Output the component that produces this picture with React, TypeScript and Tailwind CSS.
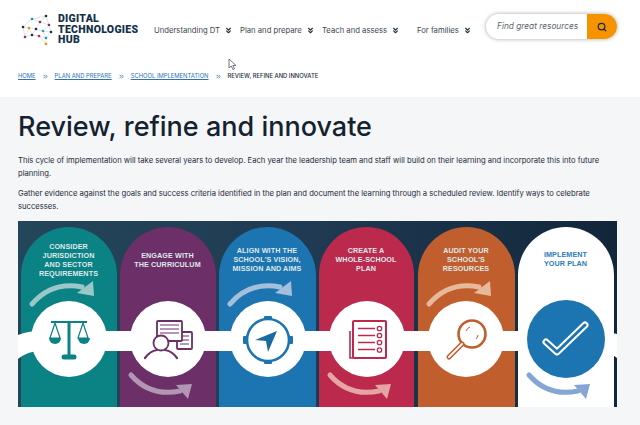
import React from 'react';
import { ChevronsDown, ChevronsRight, Search } from 'lucide-react';

const NAV = [
  { label: 'Understanding DT', cls: 'w-[86px]' },
  { label: 'Plan and prepare', cls: 'w-[82px]' },
  { label: 'Teach and assess', cls: 'w-[95px]' },
  { label: 'For families', cls: 'w-[68px]' },
];

const CRUMBS = ['HOME', 'PLAN AND PREPARE', 'SCHOOL IMPLEMENTATION'];

const DOTS: [number, number, string][] = [
  [46, 17, '#1f2f44'], [32, 20, '#1a9c9c'], [40, 23, '#8f2a6a'], [23, 28, '#1f2f44'], [49, 26, '#8f2a6a'],
  [29, 29, '#f39200'], [36, 30, '#1f2f44'], [43, 32, '#2aa0c8'], [51, 33, '#1f2f44'], [25, 38, '#8f2a6a'],
  [32, 36, '#1f2f44'], [39, 37, '#bb2a4d'], [46, 39, '#1a9c9c'], [46, 45, '#f39200'],
];

const LINKS = [[0, 1], [0, 2], [0, 4], [1, 3], [1, 2], [2, 6], [2, 4], [3, 5], [3, 9], [5, 6], [5, 10], [6, 7], [7, 4], [7, 8], [4, 8], [9, 10], [10, 11], [11, 12], [12, 13], [12, 8], [7, 12], [6, 10], [11, 13], [9, 5]];

const Logo = () => (
  <svg width="34" height="34" viewBox="20 14 34 34" className="shrink-0">
    {LINKS.map(([a, b], i) => (
      <line key={i} x1={DOTS[a][0]} y1={DOTS[a][1]} x2={DOTS[b][0]} y2={DOTS[b][1]} stroke="#c3c9d0" strokeWidth="0.5" />
    ))}
    {DOTS.map(([x, y, c], i) => <circle key={i} cx={x} cy={y} r="1.3" fill={c} />)}
  </svg>
);

const ARCHES = [
  { x: 21, w: 96, fill: '#0b8284', arrow: '#9cc7c8', lines: ['CONSIDER', 'JURISDICTION', 'AND SECTOR', 'REQUIREMENTS'], y0: 249, up: true },
  { x: 120, w: 96, fill: '#6c2f68', arrow: '#b296b3', lines: ['ENGAGE WITH', 'THE CURRICULUM'], y0: 258, up: false },
  { x: 219, w: 97, fill: '#1c75b0', arrow: '#a3bfdc', lines: ['ALIGN WITH THE', "SCHOOL'S VISION,", 'MISSION AND AIMS'], y0: 253, up: true },
  { x: 319, w: 95, fill: '#bb2a4d', arrow: '#e5a5a4', lines: ['CREATE A', 'WHOLE-SCHOOL', 'PLAN'], y0: 253, up: false },
  { x: 418, w: 97, fill: '#c15e2d', arrow: '#e6b99a', lines: ['AUDIT YOUR', "SCHOOL'S", 'RESOURCES'], y0: 253, up: true },
  { x: 518, w: 96, fill: '#ffffff', arrow: '#85a6d2', lines: ['IMPLEMENT', 'YOUR PLAN'], y0: 257, up: false },
];

const Infographic = () => (
  <svg viewBox="18 221 599 186" className="block w-[599px] h-[186px]">
    <defs>
      <linearGradient id="bg" x1="0" x2="1" y1="0" y2="0">
        <stop offset="0" stopColor="#24465a" />
        <stop offset="0.5" stopColor="#1f3a52" />
        <stop offset="1" stopColor="#12263a" />
      </linearGradient>
    </defs>
    <rect x="18" y="221" width="599" height="186" fill="url(#bg)" />
    {ARCHES.map((a, i) => {
      const r = a.w / 2;
      const cx = a.x + r;
      return (
        <g key={i}>
          <path d={`M${a.x} 407V${227 + r}a${r} ${r} 0 0 1 ${a.w} 0V407Z`} fill={a.fill} />
          {a.lines.map((t, j) => (
            <text key={t} x={cx - 0.5} y={a.y0 + j * 8.9} textAnchor="middle" fontFamily="'Liberation Sans', sans-serif" fontWeight="700" fontSize="7.2" letterSpacing="0.1" fill={i === 5 ? '#2a7db5' : '#dfe8ea'}>{t}</text>
          ))}
          {a.up ? (
            <g transform={`translate(${a.x - 21} 0)`} fill={a.arrow}>
              <path d="M32 304Q52 281 82 287" fill="none" stroke={a.arrow} strokeWidth="5" strokeLinecap="round" />
              <path d="M93 281L94 296L77 293Z" />
            </g>
          ) : (
            <g transform={`translate(${a.x - 120} 0)`} fill={a.arrow}>
              <path d="M131 375Q150 397 180 391" fill="none" stroke={a.arrow} strokeWidth="5" strokeLinecap="round" />
              <path d="M192 384L188 399L176 385Z" />
            </g>
          )}
        </g>
      );
    })}
    {/* white band through the circles */}
    <path d="M18 335Q28 331 40 331H600Q610 332 617 334V358Q608 351 600 351H40Q28 351 18 359Z" fill="#fff" />
    {[69, 168, 268, 367, 466].map(cx => <circle key={cx} cx={cx} cy="339" r="38" fill="#fff" />)}
    <circle cx="566" cy="339" r="39" fill="#1c75b0" />

    {/* scales */}
    <g fill="none" stroke="#0b8284" strokeWidth="2">
      <path d="M51 322H87" strokeWidth="1.8" />
      <path d="M69 322V357" strokeWidth="3" />
      <path d="M64 357H74" strokeWidth="5" strokeLinecap="round" />
      <path d="M55 323L50 338H60Z" strokeWidth="1.2" />
      <path d="M83 323L78 338H88Z" strokeWidth="1.2" />
      <path d="M49 338a6 6 0 0 0 12 0Z" fill="#0b8284" stroke="none" />
      <path d="M78 338a6 6 0 0 0 12 0Z" fill="#0b8284" stroke="none" />
    </g>

    {/* person with documents */}
    <g fill="#fff" stroke="#6c2f68" strokeWidth="1.8">
      <rect x="177" y="332" width="15" height="17" rx="1" />
      <path d="M180 336H189M180 340H189M180 344H189" strokeWidth="1" />
      <rect x="157" y="321" width="25" height="20" rx="1" />
      <path d="M160 325H179M160 329H179M160 333H179" strokeWidth="1.2" />
      <circle cx="161" cy="343" r="7.5" />
      <path d="M145 358Q150 351 157 350M177 358Q172 351 165 350" fill="none" strokeWidth="2.2" strokeLinecap="round" />
    </g>

    {/* compass */}
    <g>
      <circle cx="268" cy="340" r="21" fill="none" stroke="#1c75b0" strokeWidth="2.6" />
      <rect x="264" y="316" width="8" height="4" rx="1" fill="#1c75b0" />
      <rect x="264" y="360" width="8" height="4" rx="1" fill="#1c75b0" />
      <rect x="243" y="336" width="5" height="8" rx="1" fill="#1c75b0" />
      <rect x="288" y="336" width="5" height="8" rx="1" fill="#1c75b0" />
      <path d="M277 331L255 340L266 341L268 352Z" fill="#1c6a9e" />
    </g>

    {/* checklist */}
    <g fill="none" stroke="#bb2a4d">
      <rect x="353" y="321" width="33" height="37" rx="1" strokeWidth="2" fill="#fff" />
      <path d="M350 331V358H353" strokeWidth="1.6" />
      <path d="M358 328.5H375M358 335.5H375M358 342.5H375M358 349.5H375" strokeWidth="1.4" />
      <circle cx="379.5" cy="328.5" r="2.2" strokeWidth="1.3" />
      <circle cx="379.5" cy="335.5" r="2.2" strokeWidth="1.3" />
      <circle cx="379.5" cy="342.5" r="2.2" strokeWidth="1.3" />
      <circle cx="379.5" cy="350" r="2.2" strokeWidth="1.3" />
    </g>

    {/* magnifier */}
    <g fill="none" stroke="#c15e2d">
      <circle cx="472" cy="334" r="13.5" strokeWidth="2.6" />
      <path d="M466 331a7 7 0 0 1 4-4M478 335a7 7 0 0 1-2 4" strokeWidth="1" />
      <path d="M462 344L449 357" strokeWidth="5" strokeLinecap="round" />
      <path d="M462 344L449 357" strokeWidth="1.8" strokeLinecap="round" stroke="#fff" />
    </g>

    {/* tick */}
    <path d="M546 342L557 352L585 325" fill="none" stroke="#fff" strokeWidth="7" strokeLinecap="round" strokeLinejoin="round" />
    <path d="M546 342L557 352L585 325" fill="none" stroke="#1c75b0" strokeWidth="3" strokeLinecap="round" strokeLinejoin="round" />
  </svg>
);

const App: React.FC = () => {
  return (
    <div className="relative w-[640px] h-[425px] overflow-hidden bg-white font-['Inter',sans-serif] text-[#1c2b39]">
      <header className="h-[97px] bg-white pl-[20px]">
        <div className="flex items-center h-[60px]">
          <Logo />
          <div className="ml-[4px] w-[98px] font-['Roboto',sans-serif] font-black text-[10.5px] leading-[10.5px] tracking-[0.3px] text-[#12304a]">
            DIGITAL<br />TECHNOLOGIES<br />HUB
          </div>
          <nav className="flex items-center ml-[-2px] mt-[1px] text-[7.7px] text-[#3c4650]">
            {NAV.map(n => (
              <div key={n.label} className={`flex items-center gap-[4px] shrink-0 ${n.cls}`}>
                <span className="whitespace-nowrap">{n.label}</span>
                <ChevronsDown size={9} strokeWidth={3} className="text-[#1c2b39]" />
              </div>
            ))}
          </nav>
          <div className="ml-[1px] mt-[-7px] flex h-[25px] w-[131px] shrink-0 rounded-full overflow-hidden bg-white shadow-[0_0_4px_rgba(0,0,0,0.35)]">
            <div className="flex-1 flex items-center pl-[11px] italic text-[8.3px] text-[#5b6670] whitespace-nowrap">Find great resources</div>
            <div className="w-[30px] bg-[#f59300] flex items-center justify-center">
              <Search size={10} strokeWidth={3} className="text-[#1c2b39]" />
            </div>
          </div>
        </div>
        <div className="flex items-center ml-[-2px] mt-[10px] text-[5.85px] leading-[12px] whitespace-nowrap">
          {CRUMBS.map(c => (
            <React.Fragment key={c}>
              <a className="underline text-[#2f71b5]">{c}</a>
              <ChevronsRight size={7} strokeWidth={2.5} className="mx-[6px] text-[#2f5f95]" />
            </React.Fragment>
          ))}
          <span className="font-medium text-[#1c2b39]">REVIEW, REFINE AND INNOVATE</span>
        </div>
      </header>

      <main className="h-[328px] bg-[#f4f6f8] px-[18px]">
        <h1 className="pt-[14px] text-[27px] leading-[32px] font-medium text-[#14222f]">Review, refine and innovate</h1>
        <p className="mt-[12px] text-[7.65px] leading-[12.5px] text-[#1c2b39]">
          This cycle of implementation will take several years to develop. Each year the leadership team and staff will build on their learning and incorporate this into future planning.
        </p>
        <p className="mt-[8px] text-[7.65px] leading-[12.5px] text-[#1c2b39]">
          Gather evidence against the goals and success criteria identified in the plan and document the learning through a scheduled review. Identify ways to celebrate successes.
        </p>
        <div className="mt-[8px]">
          <Infographic />
        </div>
      </main>

      {/* mouse pointer caught in the screenshot */}
      <svg width="9" height="12" viewBox="0 0 9 12" className="absolute left-[228px] top-[58px]">
        <path d="M1 1V10L3.2 8L5 11.5L6.5 10.8L4.8 7.5H8Z" fill="#fff" stroke="#555" strokeWidth="0.8" />
      </svg>
    </div>
  );
};

export default App;
